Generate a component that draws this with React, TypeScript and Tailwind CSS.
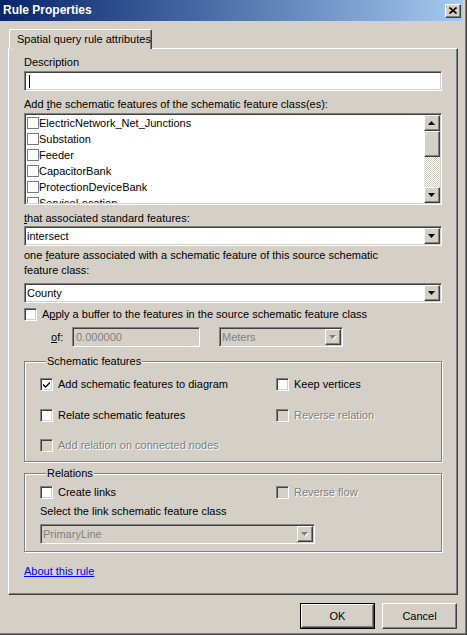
import type { ReactNode } from "react";

const raised =
  "border border-t-white border-l-white border-r-[#404040] border-b-[#404040] shadow-[inset_-1px_-1px_0_#808080]";
const sunken =
  "border border-t-[#808080] border-l-[#808080] border-r-white border-b-white shadow-[inset_1px_1px_0_#404040,inset_-1px_-1px_0_#d4d0c8]";
const greyText = "text-[#808080] [text-shadow:1px_1px_0_#ffffff]";

function Arrow({ up, disabled }: { up?: boolean; disabled?: boolean }) {
  const pts = up ? "3.5,0 7,4 0,4" : "0,0 7,0 3.5,4";
  return (
    <svg width="8" height="5" viewBox="0 0 8 5">
      {disabled && <polygon points={pts} fill="#ffffff" transform="translate(1,1)" />}
      <polygon points={pts} fill={disabled ? "#808080" : "#000000"} />
    </svg>
  );
}

function Combo({ value, className, disabled }: { value: string; className: string; disabled?: boolean }) {
  return (
    <div className={`${sunken} ${className} flex h-[20px] p-[1px] ${disabled ? "bg-[#d4d0c8] text-[#808080]" : "bg-white"}`}>
      <span className="flex-1 pl-[1px] leading-[16px]">{value}</span>
      <span className={`${raised} flex h-[16px] w-[16px] items-center justify-center bg-[#d4d0c8]`}>
        <Arrow disabled={disabled} />
      </span>
    </div>
  );
}

function Check({ checked, disabled }: { checked?: boolean; disabled?: boolean }) {
  return (
    <span className={`${sunken} flex h-[13px] w-[13px] shrink-0 items-center justify-center ${disabled ? "bg-[#d4d0c8]" : "bg-white"}`}>
      {checked && (
        <svg width="9" height="9" viewBox="0 0 9 9">
          <path d="M1 3.5 L3.5 6 L8 1.5 L8 3.5 L3.5 8 L1 5.5 Z" fill="#000000" />
        </svg>
      )}
    </span>
  );
}

function CheckRow({ label, checked, disabled }: { label: ReactNode; checked?: boolean; disabled?: boolean }) {
  return (
    <div className="flex h-[13px] items-center gap-[5px]">
      <Check checked={checked} disabled={disabled} />
      <span className={`whitespace-nowrap ${disabled ? greyText : ""}`}>{label}</span>
    </div>
  );
}

const items = [
  "ElectricNetwork_Net_Junctions",
  "Substation",
  "Feeder",
  "CapacitorBank",
  "ProtectionDeviceBank",
  "ServiceLocation",
];

export default function App() {
  return (
    <div className="h-[635px] w-[467px] overflow-hidden bg-[#d4d0c8] font-['Liberation_Sans',Arial,sans-serif] text-[11px] leading-[13px] text-black shadow-[inset_-1px_-1px_0_#404040,inset_-2px_-2px_0_#808080]">
      <div className="flex h-[21px] w-[463px] items-center justify-between bg-gradient-to-r from-[#0a246a] to-[#a6caf0] pl-[3px] pr-[2px]">
        <span className="text-[12px] font-bold text-white">Rule Properties</span>
        <span className={`${raised} flex h-[14px] w-[16px] items-center justify-center bg-[#d4d0c8]`}>
          <svg width="8" height="7" viewBox="0 0 8 7">
            <path d="M0.5 0.5 L7.5 6.5 M7.5 0.5 L0.5 6.5" stroke="#000000" strokeWidth="1.6" />
          </svg>
        </span>
      </div>

      <div className="ml-[8px] mt-[8px] w-[450px]">
        <div className="relative z-10 -mb-[1px] ml-[1px] flex h-[20px] w-[143px] items-center rounded-t-[2px] border-l border-t border-r border-white border-r-[#404040] bg-[#d4d0c8] pl-[7px] shadow-[inset_-1px_0_0_#808080]">
          Spatial query rule attributes
        </div>

        <div className="flex h-[547px] flex-col border border-t-white border-l-white border-r-[#404040] border-b-[#404040] pl-[15px] shadow-[inset_-1px_-1px_0_#808080]">
          <div className="mt-[7px]">Description</div>
          <div className={`${sunken} mt-[2px] flex h-[20px] w-[418px] items-center bg-white pl-[4px]`}>
            <span className="h-[13px] w-[1px] bg-black" />
          </div>

          <div className="mt-[7px]">
            Add <u>t</u>he schematic features of the schematic feature class(es):
          </div>
          <div className={`${sunken} mt-[2px] flex h-[92px] w-[418px] bg-white p-[1px]`}>
            <div className="flex-1 overflow-hidden pl-[1px]">
              {items.map((it) => (
                <div key={it} className="flex h-[16px] items-center">
                  <span className="h-[12px] w-[12px] shrink-0 border border-[#7a7a7a] bg-white" />
                  <span className="whitespace-nowrap">{it}</span>
                </div>
              ))}
            </div>
            <div className="flex w-[16px] flex-col">
              <span className={`${raised} flex h-[16px] items-center justify-center bg-[#d4d0c8]`}>
                <Arrow up />
              </span>
              <span className={`${raised} h-[26px] bg-[#d4d0c8]`} />
              <span className="flex-1 [background-image:repeating-conic-gradient(#d4d0c8_0%_25%,#ffffff_0%_50%)] [background-size:2px_2px]" />
              <span className={`${raised} flex h-[16px] items-center justify-center bg-[#d4d0c8]`}>
                <Arrow />
              </span>
            </div>
          </div>

          <div className="mt-[7px]">
            <u>t</u>hat associated standard features:
          </div>
          <Combo value="intersect" className="mt-[1px] w-[418px]" />

          <div className="mt-[2px] leading-[15px]">
            one <u>f</u>eature associated with a schematic feature of this source schematic
            <br />
            feature class:
          </div>
          <Combo value="County" className="mt-[5px] w-[418px]" />

          <div className="mt-[5px]">
            <CheckRow
              label={
                <>
                  A<u>p</u>ply a buffer to the features in the source schematic feature class
                </>
              }
            />
          </div>
          <div className="mt-[6px] flex h-[20px] items-center">
            <span className="ml-[27px] w-[21px]">
              <u>o</u>f:
            </span>
            <div className={`${sunken} flex h-[20px] w-[128px] items-center bg-[#d4d0c8] pl-[3px] text-[#808080]`}>0.000000</div>
            <Combo value="Meters" className="ml-[19px] w-[124px]" disabled />
          </div>

          <fieldset className="mt-[8px] w-[418px] border border-[#808080] pb-[9px] pl-[15px] shadow-[1px_1px_0_#ffffff,inset_1px_1px_0_#ffffff]">
            <legend className="ml-[6px] bg-[#d4d0c8] px-[1px]">Schematic features</legend>
            <div className="mt-[10px] flex">
              <div className="w-[236px]">
                <CheckRow label="Add schematic features to diagram" checked />
              </div>
              <CheckRow label="Keep vertices" />
            </div>
            <div className="mt-[18px] flex">
              <div className="w-[236px]">
                <CheckRow label="Relate schematic features" />
              </div>
              <CheckRow label="Reverse relation" disabled />
            </div>
            <div className="mt-[17px]">
              <CheckRow label="Add relation on connected nodes" disabled />
            </div>
          </fieldset>

          <fieldset className="mt-[5px] w-[418px] border border-[#808080] pb-[7px] pl-[15px] shadow-[1px_1px_0_#ffffff,inset_1px_1px_0_#ffffff]">
            <legend className="ml-[6px] bg-[#d4d0c8] px-[1px]">Relations</legend>
            <div className="mt-[6px] flex">
              <div className="w-[236px]">
                <CheckRow label="Create links" />
              </div>
              <CheckRow label="Reverse flow" disabled />
            </div>
            <div className="mt-[6px]">Select the link schematic feature class</div>
            <Combo value="PrimaryLine" className="mt-[6px] w-[275px]" disabled />
          </fieldset>

          <a href="#" className="mt-[13px] w-fit text-[#0000ff] underline">
            About this rule
          </a>
        </div>
      </div>

      <div className="mt-[8px] flex justify-end gap-[7px] pr-[10px]">
        <button className="flex h-[26px] w-[75px] items-center justify-center border border-black bg-[#d4d0c8] p-0">
          <span className={`${raised} flex h-full w-full items-center justify-center`}>OK</span>
        </button>
        <button className={`${raised} flex h-[26px] w-[75px] items-center justify-center bg-[#d4d0c8]`}>Cancel</button>
      </div>
    </div>
  );
}
